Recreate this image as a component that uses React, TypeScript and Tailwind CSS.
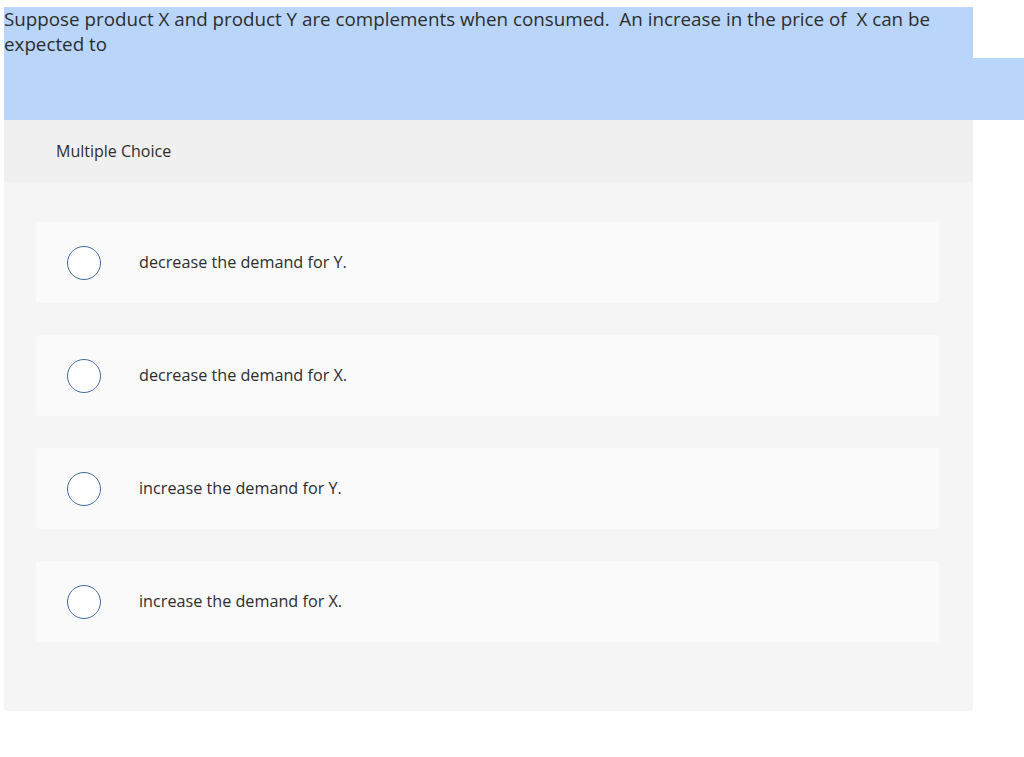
import React from "react";

const options = [
  "decrease the demand for Y.",
  "decrease the demand for X.",
  "increase the demand for Y.",
  "increase the demand for X.",
];

export default function App() {
  return (
    <div
      className="min-h-[757px] bg-white pt-[7px] pl-[4px] text-[#2d2d2d]"
      style={{ fontFamily: "'Open Sans', sans-serif" }}
    >
      <p className="w-[969px] h-[51px] bg-[#b9d6fa] text-[18.8px] leading-[25px]">
        Suppose product X and product Y are complements when consumed.&nbsp; An increase in the price of&nbsp; X can be expected to
      </p>
      <div className="w-[1020px] h-[62px] bg-[#b9d6fa]" />
      <div className="w-[969px] rounded-b-[4px] overflow-hidden">
        <div className="h-[62px] bg-[#f0f0f0] flex items-center pl-[52px] text-[16px]">
          Multiple Choice
        </div>
        <div className="bg-[#f5f5f5] pt-[40px] pb-[69px] pl-[32px] pr-[34px] flex flex-col gap-[32px]">
          {options.map((o) => (
            <div
              key={o}
              className="h-[81px] bg-[#fafafa] rounded-[4px] flex items-center pl-[31px]"
            >
              <div className="w-[34px] h-[34px] rounded-full border-[1.5px] border-[#3f6a9e] bg-white shrink-0" />
              <span className="ml-[38px] text-[16.2px]">{o}</span>
            </div>
          ))}
        </div>
      </div>
    </div>
  );
}
